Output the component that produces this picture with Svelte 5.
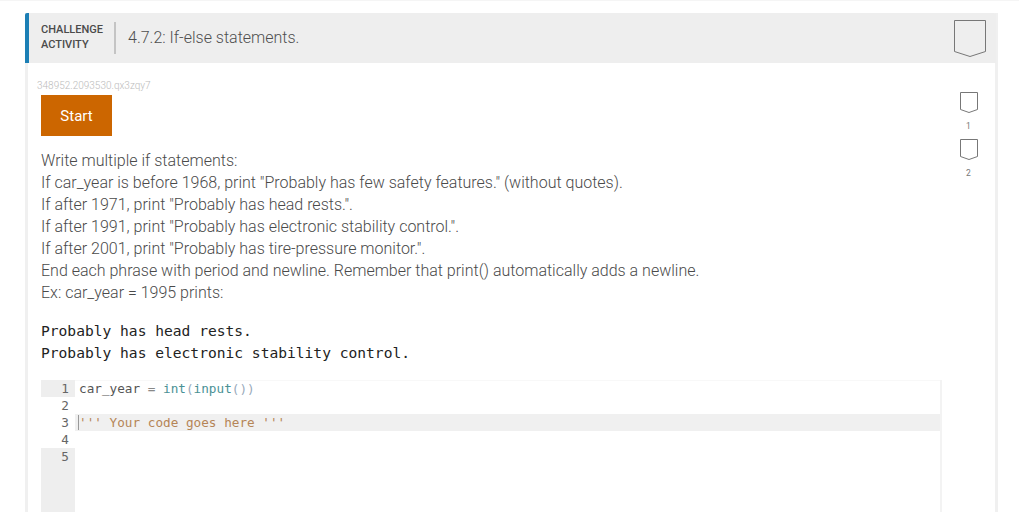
<script>
const lines = [
  'If car_year is before 1968, print "Probably has few safety features." (without quotes).',
  'If after 1971, print "Probably has head rests.".',
  'If after 1991, print "Probably has electronic stability control.".',
  'If after 2001, print "Probably has tire-pressure monitor.".',
  'End each phrase with period and newline. Remember that print() automatically adds a newline.',
  'Ex: car_year = 1995 prints:',
];
const levels = [1, 2];
</script>

<div class="page">
  <section class="card">
    <header class="head">
      <div class="kind">CHALLENGE<br />ACTIVITY</div>
      <h1>4.7.2: If-else statements.</h1>
      <svg class="chevron big" viewBox="0 0 32 37" aria-hidden="true">
        <path d="M.5.5h31v31L16 36.5.5 31.5z" />
      </svg>
    </header>

    <div class="body">
      <div class="main">
        <div class="token">348952.2093530.qx3zqy7</div>
        <button type="button" class="start">Start</button>
        <div class="prompt">
          <p>Write multiple if statements:</p>
          {#each lines as line}
            <p>{line}</p>
          {/each}
        </div>
        <pre class="sample">Probably has head rests.
Probably has electronic stability control.</pre>
        <div class="editor">
          <div class="gutter">
            <div class="num on">1</div>
            <div class="num plain">2</div>
            <div class="num plain">3</div>
            <div class="num plain">4</div>
            <div class="num on">5</div>
          </div>
          <div class="code">
            <div class="ln">car_year <span class="op">=</span> <span class="fn">int</span><span class="br">(</span><span class="fn">input</span><span class="br">())</span></div>
            <div class="ln"></div>
            <div class="ln active"><span class="caret"></span><span class="str">''' Your code goes here '''</span></div>
            <div class="ln"></div>
            <div class="ln"></div>
          </div>
        </div>
      </div>
      <aside class="levels">
        {#each levels as n}
          <div class="level">
            <svg class="chevron" viewBox="0 0 18 21" aria-hidden="true">
              <path d="M.5.5h17v17L9 20.5.5 17.5z" />
            </svg>
            <span>{n}</span>
          </div>
        {/each}
      </aside>
    </div>
  </section>
</div>

<style>
:global(body) {
  margin: 0;
  background: #fff;
  overflow: hidden;
}
.page {
  height: 512px;
  box-sizing: border-box;
  padding: 13px 23px 0 25px;
  overflow: hidden;
  border-top: 1px solid #f5f5f5;
  font-family: Roboto, "Liberation Sans", sans-serif;
  color: #555;
}
.card {
  height: 560px;
  border-right: 3px solid #f0f0f0;
  border-left: 3px solid #f0f0f0;
  margin-top: -1px;
  margin-right: -2px;
}
.head {
  display: flex;
  align-items: center;
  height: 50px;
  margin-left: -3px;
  margin-right: -1px;
  background: #eeeeee;
  border-left: 4px solid #1c7fb5;
  border-radius: 2px 2px 0 0;
  padding-left: 12px;
}
.kind {
  width: 73px;
  margin-top: -2px;
  font-size: 11px;
  line-height: 15px;
  font-weight: 500;
  color: #4a4a4a;
}
h1 {
  flex: 1;
  margin: 0;
  height: 32px;
  padding-left: 12px;
  border-left: 2px solid #c4c4c4;
  font-size: 16px;
  line-height: 32px;
  font-weight: 300;
  color: #4f4f4f;
}
.chevron {
  display: block;
  fill: none;
  stroke: #777;
  stroke-width: 1;
}
.chevron.big {
  width: 32px;
  height: 37px;
  margin: 1px 10px 0 0;
}
.body {
  display: flex;
}
.main {
  width: 901px;
  padding-left: 13px;
  flex: none;
}
.token {
  margin: 17px 0 0 -4px;
  height: 15px;
  font-size: 10px;
  line-height: 12px;
  font-weight: 300;
  color: #bbb;
}
.start {
  display: block;
  width: 71px;
  height: 41px;
  border: 0;
  padding: 0;
  background: #cc6600;
  color: #fff;
  font: 400 15px Roboto, "Liberation Sans", sans-serif;
}
.prompt {
  margin-top: 14px;
  font-size: 16px;
  line-height: 22px;
  font-weight: 300;
  color: #4a4a4a;
}
.prompt p {
  margin: 0;
  white-space: nowrap;
}
.sample {
  margin: 16px 0 0;
  font-family: "DejaVu Sans Mono", monospace;
  font-size: 14.6px;
  line-height: 22px;
  color: #222;
}
.editor {
  display: flex;
  width: 901px;
  height: 140px;
  margin-top: 16px;
  border-right: 2px solid #f3f3f3;
  box-sizing: border-box;
  font-family: "DejaVu Sans Mono", monospace;
  font-size: 12.7px;
  line-height: 17px;
}
.gutter {
  width: 34px;
  flex: none;
  background: #eeeeee;
  color: #666;
  text-align: right;
}
.num {
  height: 17px;
  padding-right: 6px;
}
.num.plain {
  background: #fff;
}
.code {
  flex: 1;
  box-shadow: inset 0 1px 0 #f8f8f8;
}
.ln {
  height: 17px;
  padding-left: 4px;
  color: #555;
  white-space: pre;
  position: relative;
}
.ln.active {
  background: #f0f0f0;
}
.caret {
  position: absolute;
  left: 3px;
  top: 1px;
  width: 1px;
  height: 15px;
  background: #999;
}
.op {
  color: #888;
}
.fn {
  color: #4a9195;
}
.br {
  color: #9ab;
}
.str {
  color: #b58557;
}
.levels {
  width: 58px;
  padding-top: 29px;
  display: flex;
  flex-direction: column;
  align-items: center;
  gap: 6px;
}
.level {
  display: flex;
  flex-direction: column;
  align-items: center;
  gap: 6px;
  font-size: 8.5px;
  line-height: 14px;
  color: #777;
}
.level svg {
  width: 18px;
  height: 21px;
}
</style>
